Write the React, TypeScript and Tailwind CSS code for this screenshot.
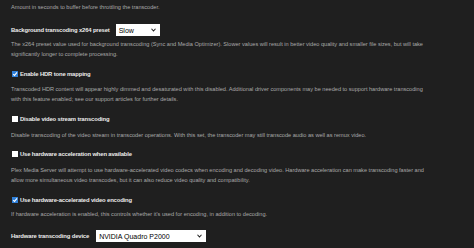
import React from 'react';

const FONT = "font-['Liberation_Sans',Arial,sans-serif]";
const LABEL = 'text-[#ececec] text-[5.9px] font-bold tracking-[-0.15px]';

// Small select box with a chevron
const Select: React.FC<{ value: string; width: string }> = ({ value, width }) => (
  <div className={`${width} h-[12px] bg-white flex items-center justify-between pl-[3px] pr-[4px] text-black text-[7px] leading-none`}>
    <span>{value}</span>
    <svg width="5" height="4" viewBox="0 0 10 8">
      <path d="M1 1.5 L5 6 L9 1.5" stroke="#222" strokeWidth="2.2" fill="none" />
    </svg>
  </div>
);

const Check: React.FC<{ checked?: boolean; label: string; className?: string }> = ({ checked, label, className = '' }) => (
  <div className={`flex items-center h-[10px] ${className}`}>
    {checked ? (
      <div className="w-[6px] h-[6px] ml-[1px] bg-[#2f7fd8] flex items-center justify-center">
        <svg width="6" height="6" viewBox="0 0 10 10">
          <path d="M2 5.2 L4.2 7.4 L8.4 2.4" stroke="#fff" strokeWidth="1.8" fill="none" />
        </svg>
      </div>
    ) : (
      <div className="w-[6px] h-[6px] ml-[1px] bg-white" />
    )}
    <span className={`ml-[2px] ${LABEL}`}>{label}</span>
  </div>
);

const Desc: React.FC<{ children: React.ReactNode; className?: string }> = ({ children, className = '' }) => (
  <p className={`text-[#a9a9a9] text-[5.6px] leading-[10px] ${className}`}>{children}</p>
);

export default function App() {
  return (
    <div className={`w-[474px] h-[248px] bg-[#1f1f1f] overflow-hidden px-[11px] pt-[2px] ${FONT}`}>
      <Desc>Amount in seconds to buffer before throttling the transcoder.</Desc>

      <div className="flex items-center h-[12px] mt-[12px]">
        <span className={LABEL}>Background transcoding x264 preset</span>
        <div className="ml-[6px]">
          <Select value="Slow" width="w-[44px]" />
        </div>
      </div>
      <Desc className="mt-[3px]">
        The x264 preset value used for background transcoding (Sync and Media Optimizer). Slower values will result in better video quality and smaller file sizes, but will take
        <br />
        significantly longer to complete processing.
      </Desc>

      <Check checked label="Enable HDR tone mapping" className="mt-[10px]" />
      <Desc className="mt-[5px]">
        Transcoded HDR content will appear highly dimmed and desaturated with this disabled. Additional driver components may be needed to support hardware transcoding
        <br />
        with this feature enabled; see our support articles for further details.
      </Desc>

      <Check label="Disable video stream transcoding" className="mt-[10px]" />
      <Desc className="mt-[6px]">
        Disable transcoding of the video stream in transcoder operations. With this set, the transcoder may still transcode audio as well as remux video.
      </Desc>

      <Check label="Use hardware acceleration when available" className="mt-[9px]" />
      <Desc className="mt-[6px]">
        Plex Media Server will attempt to use hardware-accelerated video codecs when encoding and decoding video. Hardware acceleration can make transcoding faster and
        <br />
        allow more simultaneous video transcodes, but it can also reduce video quality and compatibility.
      </Desc>

      <Check checked label="Use hardware-accelerated video encoding" className="mt-[10px]" />
      <Desc className="mt-[4px]">
        If hardware acceleration is enabled, this controls whether it's used for encoding, in addition to decoding.
      </Desc>

      <div className="flex items-center h-[12px] mt-[11px]">
        <span className={LABEL}>Hardware transcoding device</span>
        <div className="ml-[7px]">
          <Select value="NVIDIA Quadro P2000" width="w-[110px]" />
        </div>
      </div>
    </div>
  );
}
